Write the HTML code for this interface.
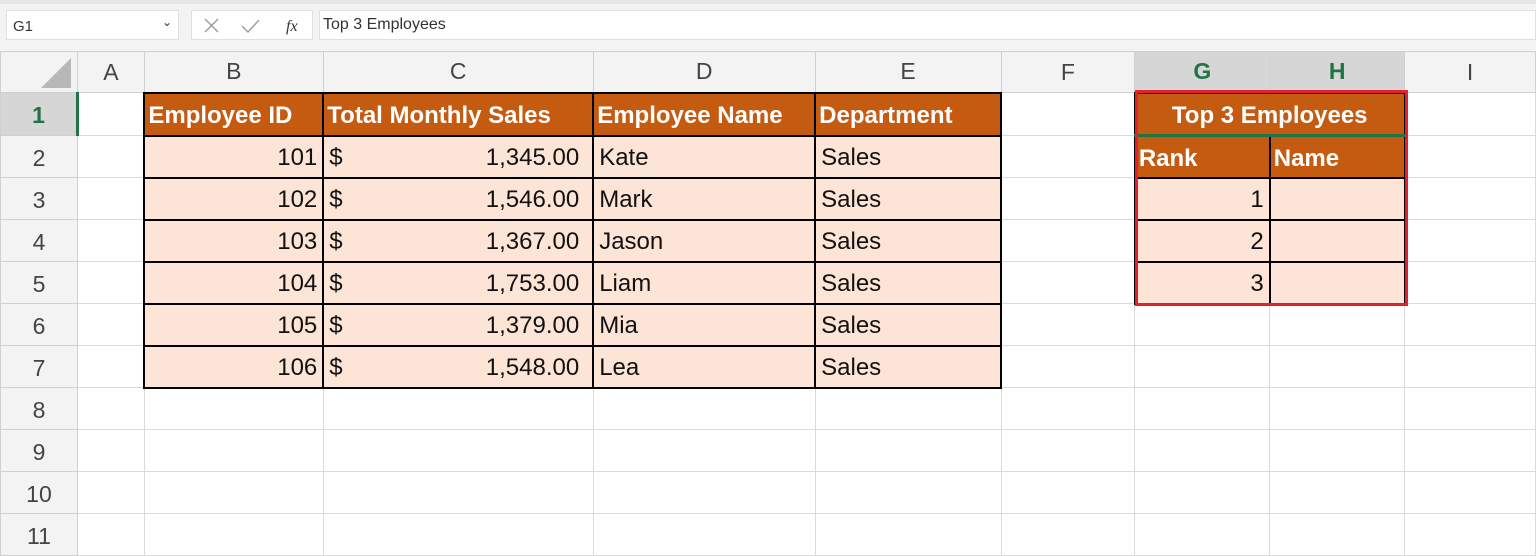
<!DOCTYPE html>
<html><head><style>
body{margin:0;width:1536px;height:555px;overflow:hidden;background:#fff;font-family:"Liberation Sans",sans-serif;position:relative}
.top{position:absolute;left:0;top:0;width:1536px;height:51px;background:#f3f3f3;border-top:4px solid #e6e6e6;box-sizing:border-box}
.nb{position:absolute;left:6px;top:6px;width:173px;height:30px;background:#fff;border:1px solid #e0e0e0;box-sizing:border-box;font-size:15px;color:#333;padding:7px 0 0 6px}
.fb{position:absolute;left:191px;top:6px;width:122px;height:30px;background:#fff;border:1px solid #e0e0e0;box-sizing:border-box}
.fx{position:absolute;left:319px;top:6px;width:1217px;height:30px;background:#fff;border:1px solid #e0e0e0;box-sizing:border-box;font-size:16px;color:#333;padding:5px 0 0 3px}
table{position:absolute;left:0;top:51px;border-collapse:collapse;table-layout:fixed}
td{border:1px solid #dadada;height:42px;padding:3px 5px 0;font-size:24px;color:#111;white-space:nowrap;overflow:hidden;box-sizing:border-box}
tr.h td{background:#f3f3f3;color:#444;text-align:center;font-size:23px;border-color:#d0d0d0;height:41px;padding-top:0}
td.rh{background:#f3f3f3;color:#444;text-align:center;border-color:#d0d0d0;font-size:23px}
td.sel{background:#d6d6d6!important;color:#217346!important;font-weight:bold}
td.o{background:#c55a11;color:#fff;font-weight:bold;border:2px solid #000;padding:4px 3px 0}
td.p{background:#fce4d6;border:2px solid #000}
.r{text-align:right}
.amt{float:right;margin-right:8px}
</style></head><body>
<div class="top">
<div class="nb">G1<span style="position:absolute;right:6px;top:4px;font-size:12px">&#8964;</span></div>
<div class="fb"><svg width="122" height="30"><path d="M13 8l13 13M26 8L13 21" stroke="#999" stroke-width="1.3"/><path d="M50 15l6 6 11-12" stroke="#999" stroke-width="1.3" fill="none"/><text x="94" y="20" font-family="Liberation Serif" font-style="italic" font-size="16" fill="#333">fx</text></svg></div>
<div class="fx">Top 3 Employees</div>
</div>
<table>
<colgroup><col style="width:77px"><col style="width:67px"><col style="width:179px"><col style="width:270px"><col style="width:222px"><col style="width:186px"><col style="width:134px"><col style="width:135px"><col style="width:135px"><col style="width:131px"></colgroup>
<tr class="h"><td><svg width="40" height="34" style="position:relative;left:14px;top:2px"><path d="M38 4V34H8Z" fill="#b8b8b8"/></svg></td><td>A</td><td>B</td><td>C</td><td>D</td><td>E</td><td>F</td><td class="sel">G</td><td class="sel">H</td><td>I</td></tr>
<tr style="height:43px"><td class="rh sel" style="border-right:3px solid #217346;height:43px">1</td><td></td><td class="o">Employee ID</td><td class="o">Total Monthly Sales</td><td class="o">Employee Name</td><td class="o">Department</td><td></td><td class="o" colspan="2" style="text-align:center;border-bottom:3px solid #217346">Top 3 Employees</td><td></td></tr>
<tr><td class="rh">2</td><td></td><td class="p r">101</td><td class="p">$<span class="amt">1,345.00</span></td><td class="p">Kate</td><td class="p">Sales</td><td></td><td class="o">Rank</td><td class="o">Name</td><td></td></tr>
<tr><td class="rh">3</td><td></td><td class="p r">102</td><td class="p">$<span class="amt">1,546.00</span></td><td class="p">Mark</td><td class="p">Sales</td><td></td><td class="p r">1</td><td class="p"></td><td></td></tr>
<tr><td class="rh">4</td><td></td><td class="p r">103</td><td class="p">$<span class="amt">1,367.00</span></td><td class="p">Jason</td><td class="p">Sales</td><td></td><td class="p r">2</td><td class="p"></td><td></td></tr>
<tr><td class="rh">5</td><td></td><td class="p r">104</td><td class="p">$<span class="amt">1,753.00</span></td><td class="p">Liam</td><td class="p">Sales</td><td></td><td class="p r">3</td><td class="p"></td><td></td></tr>
<tr><td class="rh">6</td><td></td><td class="p r">105</td><td class="p">$<span class="amt">1,379.00</span></td><td class="p">Mia</td><td class="p">Sales</td><td></td><td></td><td></td><td></td></tr>
<tr><td class="rh">7</td><td></td><td class="p r">106</td><td class="p">$<span class="amt">1,548.00</span></td><td class="p">Lea</td><td class="p">Sales</td><td></td><td></td><td></td><td></td></tr>
<tr><td class="rh">8</td><td></td><td></td><td></td><td></td><td></td><td></td><td></td><td></td><td></td></tr>
<tr><td class="rh">9</td><td></td><td></td><td></td><td></td><td></td><td></td><td></td><td></td><td></td></tr>
<tr><td class="rh">10</td><td></td><td></td><td></td><td></td><td></td><td></td><td></td><td></td><td></td></tr>
<tr><td class="rh">11</td><td></td><td></td><td></td><td></td><td></td><td></td><td></td><td></td><td></td></tr>
</table>
<div style="position:absolute;left:1135px;top:90px;width:273px;height:216px;border:3px solid #e3202c;box-sizing:border-box"></div>
</body></html>
